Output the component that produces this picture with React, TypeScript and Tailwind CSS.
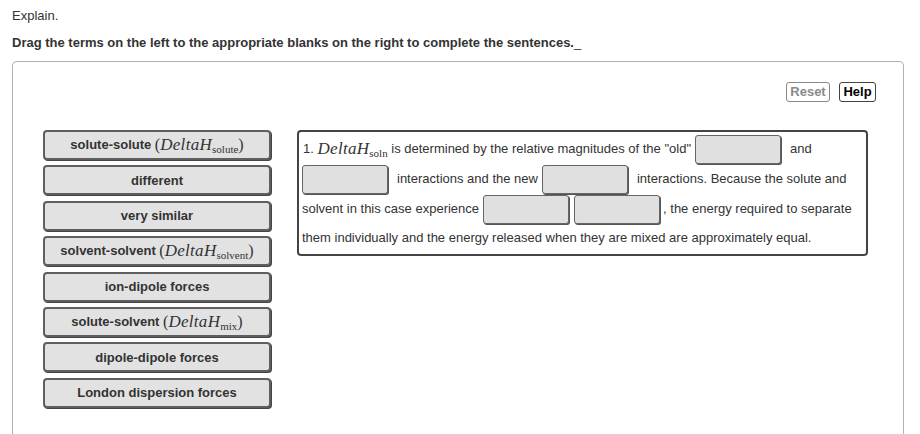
import React from "react";

const serifFam = '"Liberation Serif", "DejaVu Serif", serif';

function DH({ sub, size = 17 }: { sub: string; size?: number }) {
  return (
    <span className="inline-flex items-baseline font-normal">
      <span className="italic" style={{ fontSize: size, fontFamily: serifFam, letterSpacing: "0.3px" }}>
        DeltaH
      </span>
      <span className="relative top-[3px]" style={{ fontSize: Math.round(size * 0.66), fontFamily: serifFam }}>
        {sub}
      </span>
    </span>
  );
}

function Paren({ c }: { c: string }) {
  return (
    <span className="font-normal text-[16px]" style={{ fontFamily: serifFam }}>
      {c}
    </span>
  );
}

function Item({ children }: { children: React.ReactNode }) {
  return (
    <div className="h-[30px] w-[228px] flex items-center justify-center rounded-[4px] border-2 border-[#5f5f5f] bg-[#e2e2e2] text-[13px] font-bold text-[#333] shadow-[1px_1px_0_#444]">
      {children}
    </div>
  );
}

function Blank({ className = "" }: { className?: string }) {
  return (
    <span
      className={
        "inline-block h-[29px] w-[86px] shrink-0 rounded-[3px] border-[1.5px] border-[#666] bg-[#e0e0e0] shadow-[1px_1px_0_#555] " +
        className
      }
    />
  );
}

export default function App() {
  return (
    <div
      className="w-[920px] h-[434px] overflow-hidden bg-white text-[#333]"
      style={{ fontFamily: '"Liberation Sans", Arial, sans-serif' }}
    >
      <div className="pl-[12px] pt-[8px] text-[13px] leading-[16px]">Explain.</div>
      <div className="pl-[12px] mt-[11px] text-[13px] leading-[16px] font-bold">
        Drag the terms on the left to the appropriate blanks on the right to complete the sentences.
        <span className="font-normal">_</span>
      </div>
      <div className="ml-[12px] mt-[10px] w-[892px] h-[400px] rounded-t-[5px] border border-b-0 border-[#b0b0b0]">
        <div className="flex justify-end gap-[9px] pr-[27px] pt-[20px]">
          <button className="h-[20px] w-[44px] rounded-[3px] border border-[#888] bg-white text-[13px] leading-[18px] font-bold text-[#8a8a8a]">
            Reset
          </button>
          <button className="h-[20px] w-[37px] rounded-[3px] border border-[#444] bg-white text-[13px] leading-[18px] font-bold text-black">
            Help
          </button>
        </div>
        <div className="flex mt-[28px] pl-[30px]">
          <div className="flex flex-col gap-[5.4px]">
            <Item>
              <span>solute-solute&nbsp;</span>
              <Paren c="(" />
              <DH sub="solute" />
              <Paren c=")" />
            </Item>
            <Item>different</Item>
            <Item>very similar</Item>
            <Item>
              <span>solvent-solvent&nbsp;</span>
              <Paren c="(" />
              <DH sub="solvent" />
              <Paren c=")" />
            </Item>
            <Item>ion-dipole forces</Item>
            <Item>
              <span>solute-solvent&nbsp;</span>
              <Paren c="(" />
              <DH sub="mix" />
              <Paren c=")" />
            </Item>
            <Item>dipole-dipole forces</Item>
            <Item>London dispersion forces</Item>
          </div>
          <div className="ml-[26px] w-[571px] h-[126px] rounded-[4px] border-2 border-[#444] pl-[3px] pt-[2px] text-[13px] text-[#333] whitespace-nowrap">
            <div className="h-[30px] flex items-center">
              <span className="pl-[1px]">1.&nbsp;</span>
              <DH sub="soln" />
              <span>&nbsp;is determined by the relative magnitudes of the "old"</span>
              <Blank className="ml-[4px]" />
              <span className="ml-[9px]">and</span>
            </div>
            <div className="h-[30px] flex items-center">
              <Blank />
              <span className="ml-[9px]">interactions and the new</span>
              <Blank className="ml-[4px]" />
              <span className="ml-[9px]">interactions. Because the solute and</span>
            </div>
            <div className="h-[30px] flex items-center">
              <span>solvent in this case experience</span>
              <Blank className="ml-[4px]" />
              <Blank className="ml-[5px]" />
              <span className="ml-[3px]">, the energy required to separate</span>
            </div>
            <div className="h-[28px] flex items-center">
              <span>them individually and the energy released when they are mixed are approximately equal.</span>
            </div>
          </div>
        </div>
      </div>
    </div>
  );
}
